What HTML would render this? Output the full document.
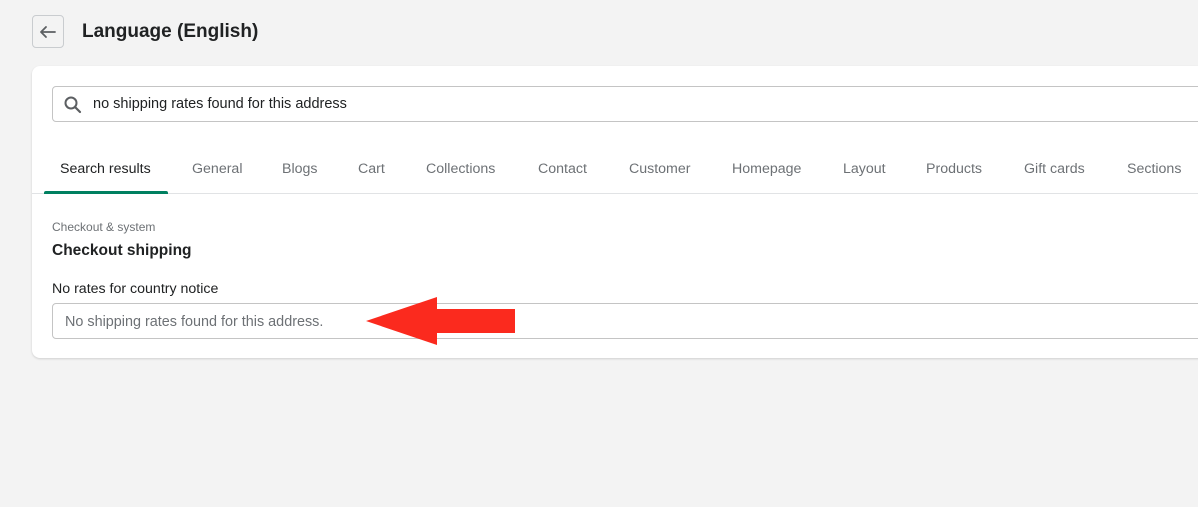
<!DOCTYPE html><html><head><style>
body{margin:0;width:1198px;height:507px;background:#f3f3f3;font-family:"Liberation Sans",sans-serif;position:relative;overflow:hidden;color:#202223}
.abs{position:absolute}
.back{left:32px;top:15px;width:32px;height:33px;border:1px solid #c9cccf;border-radius:4px;box-sizing:border-box}
.card{left:32px;top:66px;width:1200px;height:292px;background:#fff;border-radius:8px;box-shadow:0 1px 2px rgba(0,0,0,.15)}
.inp{border:1px solid #c4c4c4;border-radius:4px;box-sizing:border-box;background:#fff}
.tab{position:absolute;top:161px;font-size:14.2px;color:#6d7175}
</style></head><body>
<div class="abs back"><svg width="30" height="31" viewBox="0 0 30 31"><path d="M8 16H22M8 16L13 11M8 16L13 21" stroke="#5c5f62" stroke-width="1.8" fill="none" stroke-linecap="round"/></svg></div>
<div class="abs" style="left:82px;top:21px;font-size:19px;font-weight:bold;color:#202223">Language (English)</div>
<div class="abs card"></div>
<div class="abs inp" style="left:52px;top:86px;width:1160px;height:36px"></div>
<svg class="abs" style="left:63px;top:95px" width="20" height="20" viewBox="0 0 20 20"><circle cx="8" cy="8" r="5.5" stroke="#5c5f62" stroke-width="2" fill="none"/><path d="M12 12L17 17" stroke="#5c5f62" stroke-width="2.2" stroke-linecap="round"/></svg>
<div class="abs" style="left:93px;top:96px;font-size:14.5px">no shipping rates found for this address</div>
<div class="tab" style="left:60px;color:#202223">Search results</div>
<div class="tab" style="left:192px">General</div>
<div class="tab" style="left:282px">Blogs</div>
<div class="tab" style="left:358px">Cart</div>
<div class="tab" style="left:426px">Collections</div>
<div class="tab" style="left:538px">Contact</div>
<div class="tab" style="left:629px">Customer</div>
<div class="tab" style="left:732px">Homepage</div>
<div class="tab" style="left:843px">Layout</div>
<div class="tab" style="left:926px">Products</div>
<div class="tab" style="left:1024px">Gift cards</div>
<div class="tab" style="left:1127px">Sections</div>
<div class="abs" style="left:32px;top:193px;width:1170px;height:1px;background:#e1e3e5"></div>
<div class="abs" style="left:44px;top:191px;width:124px;height:3px;background:#008060;border-radius:2px 2px 0 0"></div>
<div class="abs" style="left:52px;top:220px;font-size:12px;color:#6d7175">Checkout &amp; system</div>
<div class="abs" style="left:52px;top:242px;font-size:15.5px;font-weight:bold">Checkout shipping</div>
<div class="abs" style="left:52px;top:281px;font-size:14.2px">No rates for country notice</div>
<div class="abs inp" style="left:52px;top:303px;width:1160px;height:36px"></div>
<div class="abs" style="left:65px;top:314px;font-size:14.4px;color:#6d7175">No shipping rates found for this address.</div>
<svg class="abs" style="left:0;top:0" width="1198" height="507"><path d="M366 321L437 297V309H515V333H437V345Z" fill="#fb2a1e"/></svg>
</body></html>
